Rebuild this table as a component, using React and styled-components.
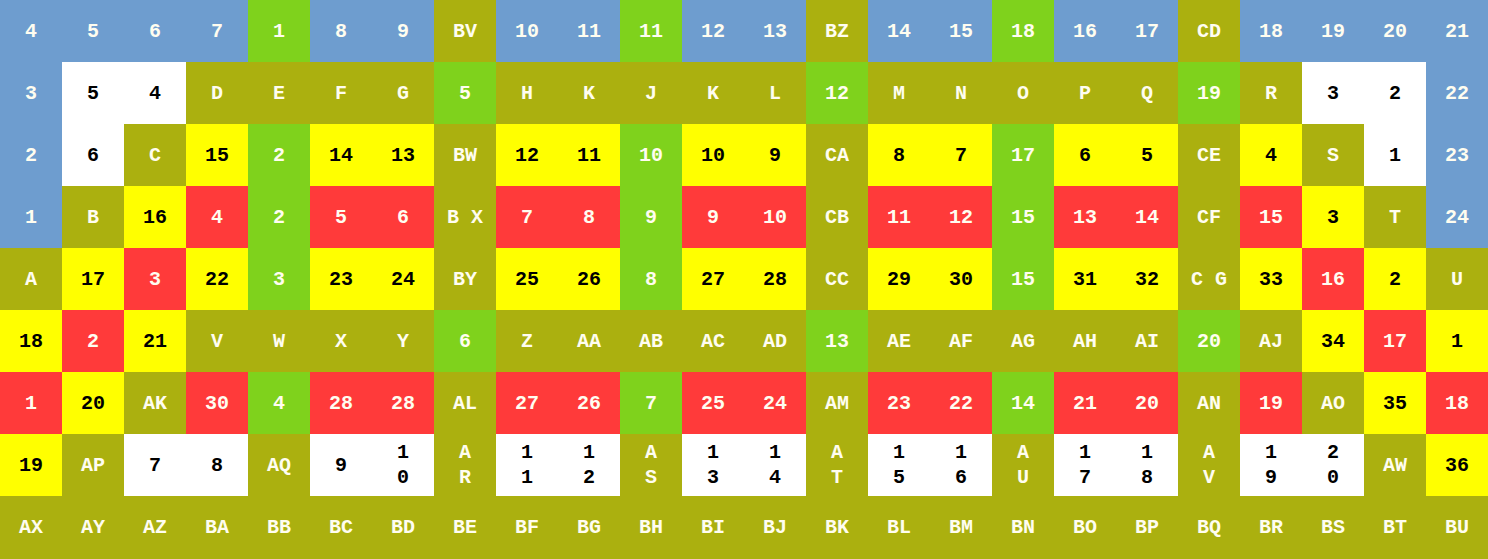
import React from "react";
import styled, { createGlobalStyle } from "styled-components";

const GlobalStyle = createGlobalStyle`
  html, body {
    margin: 0;
    padding: 0;
    background: #ffffff;
  }
`;

const palette = {
  b: "#6e9dcf",
  g: "#7fd21c",
  o: "#abb00f",
  y: "#ffff00",
  r: "#ff3a3a",
  w: "#ffffff",
};

const Board = styled.div`
  display: grid;
  grid-template-columns: repeat(24, 62px);
  grid-template-rows: repeat(8, 62px) 63px;
  width: 1488px;
  height: 559px;
  font-family: "Liberation Mono", "Courier New", monospace;
  font-weight: bold;
  font-size: 20px;
`;

const Cell = styled.div`
  display: flex;
  align-items: center;
  justify-content: center;
  text-align: center;
  white-space: pre;
  line-height: 25px;
  background: ${(p) => palette[p.$tone]};
  color: ${(p) => (p.$tone === "y" || p.$tone === "w" ? "#000000" : "#fffdf0")};
`;

// each row: "label:tone" separated by |
const rows = [
  "4:b|5:b|6:b|7:b|1:g|8:b|9:b|BV:o|10:b|11:b|11:g|12:b|13:b|BZ:o|14:b|15:b|18:g|16:b|17:b|CD:o|18:b|19:b|20:b|21:b",
  "3:b|5:w|4:w|D:o|E:o|F:o|G:o|5:g|H:o|K:o|J:o|K:o|L:o|12:g|M:o|N:o|O:o|P:o|Q:o|19:g|R:o|3:w|2:w|22:b",
  "2:b|6:w|C:o|15:y|2:g|14:y|13:y|BW:o|12:y|11:y|10:g|10:y|9:y|CA:o|8:y|7:y|17:g|6:y|5:y|CE:o|4:y|S:o|1:w|23:b",
  "1:b|B:o|16:y|4:r|2:g|5:r|6:r|B X:o|7:r|8:r|9:g|9:r|10:r|CB:o|11:r|12:r|15:g|13:r|14:r|CF:o|15:r|3:y|T:o|24:b",
  "A:o|17:y|3:r|22:y|3:g|23:y|24:y|BY:o|25:y|26:y|8:g|27:y|28:y|CC:o|29:y|30:y|15:g|31:y|32:y|C G:o|33:y|16:r|2:y|U:o",
  "18:y|2:r|21:y|V:o|W:o|X:o|Y:o|6:g|Z:o|AA:o|AB:o|AC:o|AD:o|13:g|AE:o|AF:o|AG:o|AH:o|AI:o|20:g|AJ:o|34:y|17:r|1:y",
  "1:r|20:y|AK:o|30:r|4:g|28:r|28:r|AL:o|27:r|26:r|7:g|25:r|24:r|AM:o|23:r|22:r|14:g|21:r|20:r|AN:o|19:r|AO:o|35:y|18:r",
  "19:y|AP:o|7:w|8:w|AQ:o|9:w|1\n0:w|A\nR:o|1\n1:w|1\n2:w|A\nS:o|1\n3:w|1\n4:w|A\nT:o|1\n5:w|1\n6:w|A\nU:o|1\n7:w|1\n8:w|A\nV:o|1\n9:w|2\n0:w|AW:o|36:y",
  "AX:o|AY:o|AZ:o|BA:o|BB:o|BC:o|BD:o|BE:o|BF:o|BG:o|BH:o|BI:o|BJ:o|BK:o|BL:o|BM:o|BN:o|BO:o|BP:o|BQ:o|BR:o|BS:o|BT:o|BU:o",
];

const cells = rows.flatMap((row) =>
  row.split("|").map((item) => {
    const i = item.lastIndexOf(":");
    return { label: item.slice(0, i), tone: item.slice(i + 1) };
  })
);

const App = () => (
  <>
    <GlobalStyle />
    <Board>
      {cells.map((c, i) => (
        <Cell key={i} $tone={c.tone}>
          {c.label}
        </Cell>
      ))}
    </Board>
  </>
);

export default App;
